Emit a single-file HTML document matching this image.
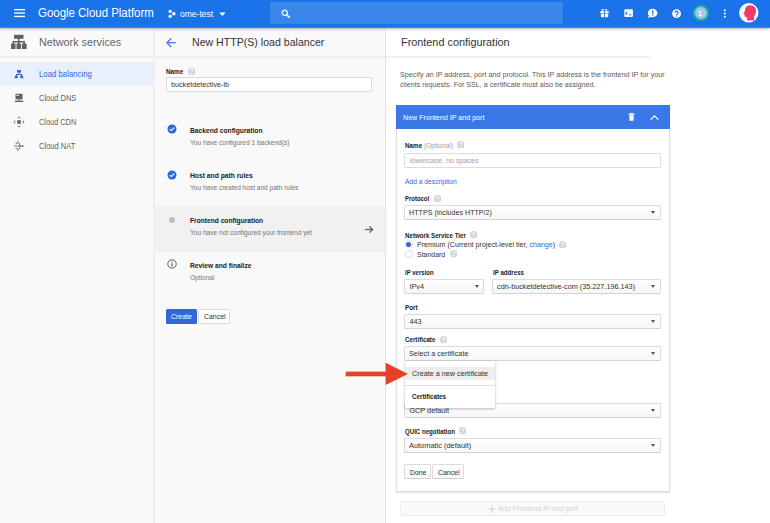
<!DOCTYPE html>
<html><head><meta charset="utf-8"><style>
html,body{margin:0;padding:0;width:770px;height:523px;overflow:hidden;background:#fff}
body{position:relative;font-family:"Liberation Sans",sans-serif}
.t{position:absolute;white-space:nowrap;line-height:0}
.help{position:absolute}
.arr{position:absolute;width:0;height:0;border-left:2.5px solid transparent;border-right:2.5px solid transparent;border-top:3px solid #555}
</style></head><body>
<div style="position:absolute;left:0px;top:0px;width:154px;height:523px;background:#fafafa"></div>
<div style="position:absolute;left:153px;top:0px;width:2px;height:523px;background:#efefef"></div>
<div style="position:absolute;left:155px;top:0px;width:230px;height:523px;background:#f9f9f9"></div>
<div style="position:absolute;left:385px;top:0px;width:1px;height:523px;background:#e4e4e4"></div>
<div style="position:absolute;left:386px;top:0px;width:384px;height:523px;background:#ffffff"></div>
<div style="position:absolute;left:0px;top:56px;width:153px;height:2px;background:#efefef"></div>
<div class="t" style="left:38.9px;top:42.02px;font-size:11.4px;color:#5f6368;font-weight:normal;transform:scaleX(0.9483);transform-origin:0 0;">Network services</div>
<svg style="position:absolute;left:10px;top:34px" width="18" height="16" viewBox="0 0 18 16">
<g fill="#616161"><rect x="4" y="0.8" width="9.5" height="4"/><rect x="8" y="4.5" width="1.6" height="3"/><rect x="2.6" y="7" width="12.3" height="1.5"/><rect x="2.6" y="7" width="1.5" height="3"/><rect x="13.4" y="7" width="1.5" height="3"/><rect x="8" y="7" width="1.6" height="3"/>
<rect x="1" y="9.6" width="4.6" height="5.4"/><rect x="6.5" y="9.6" width="4.6" height="5.4"/><rect x="12" y="9.6" width="4.6" height="5.4"/></g></svg>
<div style="position:absolute;left:0px;top:62px;width:154px;height:24px;background:#e8f0fe"></div>
<div class="t" style="left:38.7px;top:74.58px;font-size:8.2px;color:#3367d6;font-weight:normal;transform:scaleX(0.9510);transform-origin:0 0;">Load balancing</div>
<svg style="position:absolute;left:14px;top:69px" width="10" height="10" viewBox="0 0 10 10"><g fill="#3367d6">
<rect x="3" y="1" width="4" height="2.6"/><rect x="4.5" y="3.5" width="1" height="2"/><rect x="2" y="5" width="6" height="0.9"/><rect x="2" y="5" width="0.9" height="2"/><rect x="7.1" y="5" width="0.9" height="2"/>
<rect x="0.8" y="6.6" width="3" height="2.6"/><rect x="6.2" y="6.6" width="3" height="2.6"/></g></svg>
<div class="t" style="left:38.7px;top:98.58px;font-size:8.2px;color:#616161;font-weight:normal;transform:scaleX(0.9094);transform-origin:0 0;">Cloud DNS</div>
<svg style="position:absolute;left:14px;top:93px" width="10" height="10" viewBox="0 0 10 10"><g fill="#616161">
<rect x="1.5" y="0.8" width="7" height="5.6"/><rect x="4.5" y="6.4" width="1" height="1.6"/><rect x="0.8" y="7.6" width="8.4" height="1.4"/></g>
<rect x="2.6" y="1.8" width="2" height="1.2" fill="#fafafa"/></svg>
<div class="t" style="left:38.7px;top:122.58px;font-size:8.2px;color:#616161;font-weight:normal;transform:scaleX(0.8995);transform-origin:0 0;">Cloud CDN</div>
<svg style="position:absolute;left:13px;top:116px" width="12" height="12" viewBox="0 0 12 12"><g fill="none" stroke="#616161" stroke-width="0.9">
<path d="M4.5 2.2 L6 0.9 L7.5 2.2"/><path d="M4.5 9.8 L6 11.1 L7.5 9.8"/><path d="M2.2 4.5 L0.9 6 L2.2 7.5"/><path d="M9.8 4.5 L11.1 6 L9.8 7.5"/></g>
<rect x="4.2" y="4.2" width="3.6" height="3.6" fill="#616161"/></svg>
<div class="t" style="left:38.7px;top:146.58px;font-size:8.2px;color:#616161;font-weight:normal;transform:scaleX(0.9216);transform-origin:0 0;">Cloud NAT</div>
<svg style="position:absolute;left:13px;top:140px" width="12" height="12" viewBox="0 0 12 12"><g fill="none" stroke="#616161" stroke-width="0.9">
<path d="M2.6 3.3 H5.2"/><path d="M1 6 H10"/><path d="M2.6 8.7 H5.2"/><path d="M4.2 1 Q7.2 2.8 7.2 6 Q7.2 9.2 4.2 11"/></g><path d="M9.3 4.7 L11.1 6 L9.3 7.3Z" fill="#616161"/></svg>
<div style="position:absolute;left:155px;top:56px;width:230px;height:2px;background:#efefef"></div>
<svg style="position:absolute;left:165px;top:37px" width="12" height="12" viewBox="0 0 12 12"><g fill="none" stroke="#3b78e7" stroke-width="1.3">
<path d="M10.7 5.7 H2.2"/><path d="M6.2 1.4 L1.9 5.7 L6.2 10"/></g></svg>
<div class="t" style="left:191.9px;top:42.04px;font-size:11.2px;color:#333333;font-weight:normal;transform:scaleX(0.9461);transform-origin:0 0;">New HTTP(S) load balancer</div>
<div class="t" style="left:166.4px;top:71.84px;font-size:6.8px;color:#212121;font-weight:bold;transform:scaleX(0.9340);transform-origin:0 0;">Name</div>
<svg class="help" style="left:187.5px;top:67.8px" width="7.4" height="7.4" viewBox="0 0 10 10"><circle cx="5" cy="5" r="5" fill="#d4d4d4"/><path d="M3.4 3.9 Q3.4 2.1 5 2.1 Q6.7 2.1 6.7 3.6 Q6.7 4.6 5.6 5.2 Q5 5.5 5 6.6" fill="none" stroke="#fff" stroke-width="1.2"/><rect x="4.35" y="7.1" width="1.3" height="1.3" fill="#fff"/></svg>
<div style="position:absolute;left:166px;top:77.3px;width:206.3px;height:14.5px;background:#fff;border:1px solid #dadada;box-sizing:border-box;border-radius:1px"></div>
<div class="t" style="left:170.9px;top:84.74px;font-size:7.4px;color:#333333;font-weight:normal;transform:scaleX(0.9741);transform-origin:0 0;">bucketdetective-lb</div>
<svg style="position:absolute;left:166.6px;top:123.6px" width="10" height="10" viewBox="0 0 10 10"><circle cx="5" cy="5" r="4.5" fill="#3367d6"/><path d="M2.8 5.2 L4.3 6.6 L7.2 3.7" fill="none" stroke="#fff" stroke-width="1.1"/></svg>
<div class="t" style="left:190.2px;top:130.75px;font-size:7.3px;color:#212121;font-weight:bold;transform:scaleX(0.9167);transform-origin:0 0;">Backend configuration</div>
<div class="t" style="left:190.2px;top:142.84px;font-size:6.8px;color:#757575;font-weight:normal;transform:scaleX(0.9655);transform-origin:0 0;">You have configured 1 backend(s)</div>
<svg style="position:absolute;left:166.5px;top:169.5px" width="10" height="10" viewBox="0 0 10 10"><circle cx="5" cy="5" r="4.5" fill="#3367d6"/><path d="M2.8 5.2 L4.3 6.6 L7.2 3.7" fill="none" stroke="#fff" stroke-width="1.1"/></svg>
<div class="t" style="left:190.2px;top:175.75px;font-size:7.3px;color:#212121;font-weight:bold;transform:scaleX(0.9216);transform-origin:0 0;">Host and path rules</div>
<div class="t" style="left:190.2px;top:187.84px;font-size:6.8px;color:#757575;font-weight:normal;transform:scaleX(0.9643);transform-origin:0 0;">You have created host and path rules</div>
<div style="position:absolute;left:155px;top:206px;width:230px;height:46px;background:#f1f1f1"></div>
<div style="position:absolute;left:169px;top:216.7px;width:6px;height:6px;border-radius:50%;background:#bdbdbd"></div>
<div class="t" style="left:190.2px;top:220.75px;font-size:7.3px;color:#212121;font-weight:bold;transform:scaleX(0.9117);transform-origin:0 0;">Frontend configuration</div>
<div class="t" style="left:190.2px;top:232.84px;font-size:6.8px;color:#757575;font-weight:normal;transform:scaleX(0.9681);transform-origin:0 0;">You have not configured your frontend yet</div>
<svg style="position:absolute;left:363px;top:224px" width="11" height="11" viewBox="0 0 11 11"><g fill="none" stroke="#616161" stroke-width="1.3"><path d="M2 5.5 H9.4"/><path d="M6.5 2.4 L9.6 5.5 L6.5 8.6"/></g></svg>
<svg style="position:absolute;left:166.5px;top:259px" width="10" height="10" viewBox="0 0 10 10"><circle cx="5" cy="5" r="4.2" fill="none" stroke="#616161" stroke-width="1"/><rect x="4.4" y="4.3" width="1.2" height="3.2" fill="#616161"/><rect x="4.4" y="2.5" width="1.2" height="1.1" fill="#616161"/></svg>
<div class="t" style="left:190.2px;top:265.75px;font-size:7.3px;color:#212121;font-weight:bold;transform:scaleX(0.9203);transform-origin:0 0;">Review and finalize</div>
<div class="t" style="left:190.2px;top:277.84px;font-size:6.8px;color:#757575;font-weight:normal;transform:scaleX(0.9673);transform-origin:0 0;">Optional</div>
<div style="position:absolute;left:166px;top:309px;width:31px;height:15px;background:#3367d6;border-radius:1.5px"></div>
<div class="t" style="left:170.9px;top:316.75px;font-size:7.3px;color:#ffffff;font-weight:normal;transform:scaleX(0.9493);transform-origin:0 0;">Create</div>
<div style="position:absolute;left:198px;top:309px;width:32px;height:15px;background:#fff;border:1px solid #dadada;box-sizing:border-box;border-radius:1.5px"></div>
<div class="t" style="left:203.6px;top:316.75px;font-size:7.3px;color:#333333;font-weight:normal;transform:scaleX(0.9506);transform-origin:0 0;">Cancel</div>
<div class="t" style="left:400.5px;top:42.02px;font-size:11.4px;color:#333333;font-weight:normal;transform:scaleX(0.9529);transform-origin:0 0;">Frontend configuration</div>
<div style="position:absolute;left:386px;top:56px;width:264px;height:2px;background:#f0f0f0"></div>
<div class="t" style="left:400px;top:74.74px;font-size:7.4px;color:#5a5a5a;font-weight:normal;transform:scaleX(0.9751);transform-origin:0 0;">Specify an IP address, port and protocol. This IP address is the frontend IP for your</div>
<div class="t" style="left:400px;top:84.74px;font-size:7.4px;color:#5a5a5a;font-weight:normal;transform:scaleX(0.9671);transform-origin:0 0;">clients requests. For SSL, a certificate must also be assigned.</div>
<div style="position:absolute;left:395.5px;top:105px;width:274px;height:386.5px;background:#fff;border:1px solid #dedede;box-sizing:border-box;box-shadow:0 1px 1.5px rgba(0,0,0,0.12)"></div>
<div style="position:absolute;left:395.5px;top:105px;width:274px;height:24px;background:#3b78e7"></div>
<div class="t" style="left:402.9px;top:117.74px;font-size:7.4px;color:#ffffff;font-weight:normal;transform:scaleX(0.9633);transform-origin:0 0;">New Frontend IP and port</div>
<svg style="position:absolute;left:627px;top:112px" width="9" height="10" viewBox="0 0 9 10"><g fill="#fff"><rect x="1.5" y="1.6" width="6" height="1.2"/><rect x="3.3" y="0.9" width="2.4" height="1"/><path d="M2.2 3.3 H6.8 L6.5 8.8 H2.5Z"/></g></svg>
<svg style="position:absolute;left:649px;top:113px" width="11" height="9" viewBox="0 0 11 9"><path d="M1.6 6.6 L5.5 2.8 L9.4 6.6" fill="none" stroke="#fff" stroke-width="1.3"/></svg>
<div class="t" style="left:404.7px;top:145.85px;font-size:6.7px;color:#212121;font-weight:bold;transform:scaleX(0.9425);transform-origin:0 0;">Name</div>
<div class="t" style="left:423.8px;top:145.84px;font-size:6.8px;color:#9e9e9e;font-weight:normal;transform:scaleX(0.9713);transform-origin:0 0;">(Optional)</div>
<svg class="help" style="left:456.90000000000003px;top:141.10000000000002px" width="7.4" height="7.4" viewBox="0 0 10 10"><circle cx="5" cy="5" r="5" fill="#d4d4d4"/><path d="M3.4 3.9 Q3.4 2.1 5 2.1 Q6.7 2.1 6.7 3.6 Q6.7 4.6 5.6 5.2 Q5 5.5 5 6.6" fill="none" stroke="#fff" stroke-width="1.2"/><rect x="4.35" y="7.1" width="1.3" height="1.3" fill="#fff"/></svg>
<div style="position:absolute;left:404.4px;top:152.8px;width:256.3px;height:14.8px;background:#fff;border:1px solid #dcdcdc;box-sizing:border-box;border-radius:1.5px"></div>
<div class="t" style="left:409.5px;top:160.75px;font-size:7.3px;color:#9e9e9e;font-weight:normal;transform:scaleX(0.9758);transform-origin:0 0;">lowercase, no spaces</div>
<div class="t" style="left:404.7px;top:181.80px;font-size:7.0px;color:#3367d6;font-weight:normal;transform:scaleX(0.9558);transform-origin:0 0;">Add a description</div>
<div class="t" style="left:405px;top:198.85px;font-size:6.7px;color:#212121;font-weight:bold;transform:scaleX(0.8906);transform-origin:0 0;">Protocol</div>
<svg class="help" style="left:433.5px;top:194.8px" width="7.4" height="7.4" viewBox="0 0 10 10"><circle cx="5" cy="5" r="5" fill="#d4d4d4"/><path d="M3.4 3.9 Q3.4 2.1 5 2.1 Q6.7 2.1 6.7 3.6 Q6.7 4.6 5.6 5.2 Q5 5.5 5 6.6" fill="none" stroke="#fff" stroke-width="1.2"/><rect x="4.35" y="7.1" width="1.3" height="1.3" fill="#fff"/></svg>
<div style="position:absolute;left:404.4px;top:205.3px;width:256.2px;height:14.6px;background:linear-gradient(#ffffff,#f6f6f6);border:1px solid #dcdcdc;border-bottom-color:#d2d2d2;box-sizing:border-box;border-radius:1.5px"></div>
<div class="t" style="left:409.4px;top:212.75px;font-size:7.3px;color:#333333;font-weight:normal;transform:scaleX(0.9790);transform-origin:0 0;">HTTPS (includes HTTP/2)</div>
<div class="arr" style="left:650.5999999999999px;top:211.10000000000002px"></div>
<div class="t" style="left:405px;top:235.85px;font-size:6.7px;color:#212121;font-weight:bold;transform:scaleX(0.9219);transform-origin:0 0;">Network Service Tier</div>
<svg class="help" style="left:470.3px;top:231.3px" width="7.4" height="7.4" viewBox="0 0 10 10"><circle cx="5" cy="5" r="5" fill="#d4d4d4"/><path d="M3.4 3.9 Q3.4 2.1 5 2.1 Q6.7 2.1 6.7 3.6 Q6.7 4.6 5.6 5.2 Q5 5.5 5 6.6" fill="none" stroke="#fff" stroke-width="1.2"/><rect x="4.35" y="7.1" width="1.3" height="1.3" fill="#fff"/></svg>
<div style="position:absolute;left:404.6px;top:240.3px;width:8px;height:8px;border-radius:50%;border:0.8px solid #dddddd;box-sizing:border-box;background:#fff"></div>
<div style="position:absolute;left:406px;top:241.7px;width:5.2px;height:5.2px;border-radius:50%;background:#3367d6"></div>
<div class="t" style="left:416.8px;top:244.75px;font-size:7.3px;color:#333333;font-weight:normal;transform:scaleX(0.9760);transform-origin:0 0;">Premium (Current project-level tier, <span style="color:#3367d6">change</span>)</div>
<svg class="help" style="left:559.3px;top:240.8px" width="7.4" height="7.4" viewBox="0 0 10 10"><circle cx="5" cy="5" r="5" fill="#d4d4d4"/><path d="M3.4 3.9 Q3.4 2.1 5 2.1 Q6.7 2.1 6.7 3.6 Q6.7 4.6 5.6 5.2 Q5 5.5 5 6.6" fill="none" stroke="#fff" stroke-width="1.2"/><rect x="4.35" y="7.1" width="1.3" height="1.3" fill="#fff"/></svg>
<div style="position:absolute;left:404.6px;top:250px;width:8px;height:8px;border-radius:50%;border:0.8px solid #dddddd;box-sizing:border-box;background:#fff"></div>
<div class="t" style="left:416.8px;top:254.75px;font-size:7.3px;color:#333333;font-weight:normal;transform:scaleX(0.9518);transform-origin:0 0;">Standard</div>
<svg class="help" style="left:449.8px;top:250.3px" width="7.4" height="7.4" viewBox="0 0 10 10"><circle cx="5" cy="5" r="5" fill="#d4d4d4"/><path d="M3.4 3.9 Q3.4 2.1 5 2.1 Q6.7 2.1 6.7 3.6 Q6.7 4.6 5.6 5.2 Q5 5.5 5 6.6" fill="none" stroke="#fff" stroke-width="1.2"/><rect x="4.35" y="7.1" width="1.3" height="1.3" fill="#fff"/></svg>
<div class="t" style="left:405px;top:272.85px;font-size:6.7px;color:#212121;font-weight:bold;transform:scaleX(0.8996);transform-origin:0 0;">IP version</div>
<div style="position:absolute;left:404.4px;top:279.3px;width:80.1px;height:14.6px;background:linear-gradient(#ffffff,#f6f6f6);border:1px solid #dcdcdc;border-bottom-color:#d2d2d2;box-sizing:border-box;border-radius:1.5px"></div>
<div class="t" style="left:409.4px;top:286.75px;font-size:7.3px;color:#333333;font-weight:normal;">IPv4</div>
<div class="arr" style="left:474.5px;top:285.1px"></div>
<div class="t" style="left:492.6px;top:272.85px;font-size:6.7px;color:#212121;font-weight:bold;transform:scaleX(0.9210);transform-origin:0 0;">IP address</div>
<div style="position:absolute;left:492.3px;top:279.3px;width:168.4px;height:14.6px;background:linear-gradient(#ffffff,#f6f6f6);border:1px solid #dcdcdc;border-bottom-color:#d2d2d2;box-sizing:border-box;border-radius:1.5px"></div>
<div class="t" style="left:497.3px;top:286.75px;font-size:7.3px;color:#333333;font-weight:normal;transform:scaleX(0.9951);transform-origin:0 0;">cdn-bucketdetective-com (35.227.196.143)</div>
<div class="arr" style="left:650.7px;top:285.1px"></div>
<div class="t" style="left:405px;top:307.85px;font-size:6.7px;color:#212121;font-weight:bold;transform:scaleX(0.9403);transform-origin:0 0;">Port</div>
<div style="position:absolute;left:404.4px;top:314.2px;width:256.2px;height:14.6px;background:linear-gradient(#ffffff,#f6f6f6);border:1px solid #dcdcdc;border-bottom-color:#d2d2d2;box-sizing:border-box;border-radius:1.5px"></div>
<div class="t" style="left:409.4px;top:321.75px;font-size:7.3px;color:#333333;font-weight:normal;">443</div>
<div class="arr" style="left:650.5999999999999px;top:320.0px"></div>
<div class="t" style="left:404.8px;top:339.85px;font-size:6.7px;color:#212121;font-weight:bold;transform:scaleX(0.9278);transform-origin:0 0;">Certificate</div>
<svg class="help" style="left:439.8px;top:335.8px" width="7.4" height="7.4" viewBox="0 0 10 10"><circle cx="5" cy="5" r="5" fill="#d4d4d4"/><path d="M3.4 3.9 Q3.4 2.1 5 2.1 Q6.7 2.1 6.7 3.6 Q6.7 4.6 5.6 5.2 Q5 5.5 5 6.6" fill="none" stroke="#fff" stroke-width="1.2"/><rect x="4.35" y="7.1" width="1.3" height="1.3" fill="#fff"/></svg>
<div style="position:absolute;left:404.4px;top:346.4px;width:256.3px;height:14.6px;background:linear-gradient(#ffffff,#f6f6f6);border:1px solid #dcdcdc;border-bottom-color:#d2d2d2;box-sizing:border-box;border-radius:1.5px"></div>
<div class="t" style="left:409.4px;top:353.75px;font-size:7.3px;color:#333333;font-weight:normal;transform:scaleX(0.9976);transform-origin:0 0;">Select a certificate</div>
<div class="arr" style="left:650.7px;top:352.2px"></div>
<div style="position:absolute;left:404.4px;top:403px;width:256.2px;height:14.6px;background:linear-gradient(#ffffff,#f6f6f6);border:1px solid #dcdcdc;border-bottom-color:#d2d2d2;box-sizing:border-box;border-radius:1.5px"></div>
<div class="t" style="left:409.4px;top:410.75px;font-size:7.3px;color:#333333;font-weight:normal;">GCP default</div>
<div class="arr" style="left:650.5999999999999px;top:408.8px"></div>
<div class="t" style="left:405px;top:431.85px;font-size:6.7px;color:#212121;font-weight:bold;transform:scaleX(0.9139);transform-origin:0 0;">QUIC negotiation</div>
<svg class="help" style="left:458.8px;top:427.3px" width="7.4" height="7.4" viewBox="0 0 10 10"><circle cx="5" cy="5" r="5" fill="#d4d4d4"/><path d="M3.4 3.9 Q3.4 2.1 5 2.1 Q6.7 2.1 6.7 3.6 Q6.7 4.6 5.6 5.2 Q5 5.5 5 6.6" fill="none" stroke="#fff" stroke-width="1.2"/><rect x="4.35" y="7.1" width="1.3" height="1.3" fill="#fff"/></svg>
<div style="position:absolute;left:404.4px;top:438.2px;width:256.2px;height:14.6px;background:linear-gradient(#ffffff,#f6f6f6);border:1px solid #dcdcdc;border-bottom-color:#d2d2d2;box-sizing:border-box;border-radius:1.5px"></div>
<div class="t" style="left:409.4px;top:445.75px;font-size:7.3px;color:#333333;font-weight:normal;transform:scaleX(1.0152);transform-origin:0 0;">Automatic (default)</div>
<div class="arr" style="left:650.5999999999999px;top:444.0px"></div>
<div style="position:absolute;left:404.4px;top:464.3px;width:26.4px;height:14.6px;background:linear-gradient(#ffffff,#f6f6f6);border:1px solid #dcdcdc;border-bottom-color:#d2d2d2;box-sizing:border-box;border-radius:1.5px"></div>
<div class="t" style="left:409.5px;top:472.69px;font-size:7.6px;color:#333333;font-weight:normal;transform:scaleX(0.9026);transform-origin:0 0;">Done</div>
<div style="position:absolute;left:432.3px;top:464.3px;width:31.7px;height:14.6px;background:linear-gradient(#ffffff,#f6f6f6);border:1px solid #dcdcdc;border-bottom-color:#d2d2d2;box-sizing:border-box;border-radius:1.5px"></div>
<div class="t" style="left:437.7px;top:472.69px;font-size:7.6px;color:#333333;font-weight:normal;transform:scaleX(0.9088);transform-origin:0 0;">Cancel</div>
<div style="position:absolute;left:400.3px;top:501.4px;width:264.7px;height:15px;background:#f9f9f9;border:1px solid #eeeeee;box-sizing:border-box;border-radius:1px"></div>
<svg style="position:absolute;left:488px;top:504.5px" width="8" height="8" viewBox="0 0 8 8"><g fill="#d4d4d4"><rect x="3.4" y="0.5" width="1.2" height="7"/><rect x="0.5" y="3.4" width="7" height="1.2"/></g></svg>
<div class="t" style="left:497.8px;top:508.75px;font-size:7.3px;color:#d4d4d4;font-weight:normal;transform:scaleX(0.9775);transform-origin:0 0;">Add Frontend IP and port</div>
<div style="position:absolute;left:404.8px;top:360.9px;width:90.7px;height:46.9px;background:#fff;box-shadow:0 1px 3px rgba(0,0,0,0.28);border-radius:1px"></div>
<div style="position:absolute;left:404.8px;top:366.6px;width:90.7px;height:13.4px;background:#eeeeee"></div>
<div class="t" style="left:412.3px;top:373.75px;font-size:7.3px;color:#333333;font-weight:normal;transform:scaleX(0.9910);transform-origin:0 0;">Create a new certificate</div>
<div style="position:absolute;left:404.8px;top:385.2px;width:90.7px;height:0.8px;background:#e0e0e0"></div>
<div class="t" style="left:412.3px;top:396.85px;font-size:6.7px;color:#212121;font-weight:bold;transform:scaleX(0.9344);transform-origin:0 0;">Certificates</div>
<svg style="position:absolute;left:340px;top:355px" width="70" height="35" viewBox="0 0 70 35"><g fill="#e8412a"><rect x="5.7" y="16.6" width="41" height="4.7"/><path d="M45.7 7.8 L68 19 L45.7 30.1Z"/></g></svg>
<div style="position:absolute;left:0px;top:0px;width:770px;height:28px;background:linear-gradient(to bottom,#1a73e8 0,#1a73e8 27px,#3d7fd6 27px,#5d8ac4 28px);box-shadow:0 1px 2.5px rgba(40,20,0,0.32)"></div>
<svg style="position:absolute;left:13.5px;top:9px" width="12" height="9" viewBox="0 0 12 9"><g fill="#fff"><rect x="0" y="0" width="11" height="1.3"/><rect x="0" y="3.4" width="11" height="1.3"/><rect x="0" y="6.8" width="11" height="1.3"/></g></svg>
<div class="t" style="left:38px;top:12.94px;font-size:12.0px;color:#ffffff;font-weight:normal;transform:scaleX(0.9539);transform-origin:0 0;">Google Cloud Platform</div>
<svg style="position:absolute;left:167px;top:9px" width="10" height="10" viewBox="0 0 10 10"><g fill="#fff"><circle cx="3.2" cy="2.3" r="1.65"/><circle cx="3.2" cy="7.3" r="1.65"/><circle cx="6.8" cy="4.8" r="1.8"/></g></svg>
<div class="t" style="left:180px;top:13.98px;font-size:8.8px;color:#ffffff;font-weight:normal;transform:scaleX(0.9698);transform-origin:0 0;">ome-test</div>
<svg style="position:absolute;left:219px;top:11.5px" width="7" height="5" viewBox="0 0 7 5"><path d="M0.2 0.5 H6.6 L3.4 4Z" fill="#fff"/></svg>
<div style="position:absolute;left:269.5px;top:2px;width:293.5px;height:22px;background:#3b86ea;border-radius:1px"></div>
<svg style="position:absolute;left:280.5px;top:8.5px" width="10" height="10" viewBox="0 0 10 10"><circle cx="3.8" cy="3.8" r="2.6" fill="none" stroke="#fff" stroke-width="1.2"/><path d="M5.7 5.7 L8.6 8.6" stroke="#fff" stroke-width="1.6"/></svg>
<svg style="position:absolute;left:600px;top:9px" width="9" height="9" viewBox="0 0 9 9"><g fill="#fff"><ellipse cx="2.7" cy="0.9" rx="1.2" ry="0.8"/><ellipse cx="6.1" cy="0.9" rx="1.2" ry="0.8"/><rect x="0.2" y="2.2" width="3.8" height="1.9"/><rect x="4.8" y="2.2" width="3.9" height="1.9"/><rect x="0.9" y="4.6" width="3.1" height="3.6"/><rect x="4.8" y="4.6" width="3.4" height="3.6"/></g></svg>
<svg style="position:absolute;left:624px;top:9px" width="9" height="9" viewBox="0 0 9 9"><rect x="0.3" y="0.2" width="8.6" height="7.9" rx="1" fill="#fff"/><path d="M1.5 3 L2.9 4.3 L1.5 5.6" fill="none" stroke="#1a73e8" stroke-width="1.1"/><rect x="5" y="5.3" width="2.3" height="1" fill="#1a73e8"/></svg>
<svg style="position:absolute;left:647px;top:8.2px" width="11" height="11" viewBox="0 0 11 11"><path d="M5.8 0.7 A4.8 4.3 0 1 1 3.6 8.9 L1.1 9.9 L1.9 7.6 A4.8 4.3 0 0 1 5.8 0.7Z" fill="#fff"/><rect x="5.15" y="2.2" width="1.3" height="3.6" fill="#1a73e8"/><rect x="5.15" y="6.4" width="1.3" height="1.3" fill="#1a73e8"/></svg>
<svg style="position:absolute;left:672px;top:8.6px" width="10" height="10" viewBox="0 0 10 10"><circle cx="4.6" cy="4.6" r="4.4" fill="#fff"/><path d="M3.1 3.7 Q3.1 2.1 4.6 2.1 Q6.1 2.1 6.1 3.4 Q6.1 4.3 5.2 4.8 Q4.6 5.1 4.6 5.9" fill="none" stroke="#1a73e8" stroke-width="1.2"/><rect x="3.95" y="6.4" width="1.3" height="1.2" fill="#1a73e8"/></svg>
<div style="position:absolute;left:692.8px;top:5.2px;width:15.8px;height:15.8px;border-radius:50%;background:#a8c4f6;border:2px solid #1db48a;box-sizing:border-box"></div>
<div class="t" style="left:698.2px;top:13.84px;font-size:6.8px;color:#ffffff;font-weight:bold;">1</div>
<svg style="position:absolute;left:722px;top:9px" width="5" height="10" viewBox="0 0 5 10"><g fill="#fff"><circle cx="2.8" cy="1.3" r="1.05"/><circle cx="2.8" cy="4.5" r="1.05"/><circle cx="2.8" cy="7.7" r="1.05"/></g></svg>
<svg style="position:absolute;left:739px;top:3.2px" width="20" height="20" viewBox="0 0 20 20"><circle cx="9.8" cy="9.8" r="9.7" fill="#fff"/><path d="M8 17.6 L15.3 17.6 L15 13.6 Q17.2 11.3 17.1 7.8 Q16.6 2.4 11.4 2.2 Q6.9 2.3 6 6.2 L5.9 8.2 L4.2 10.6 L5.5 11.2 L5.4 12.8 Q5.6 14.1 7.1 14 L8 14.3 Z" fill="#ef3a6c"/></svg>
</body></html>
